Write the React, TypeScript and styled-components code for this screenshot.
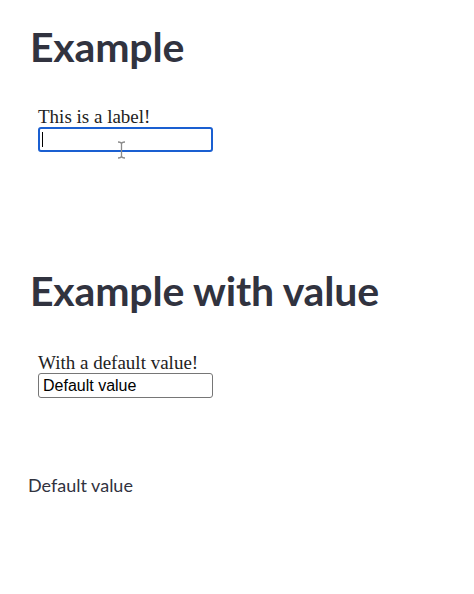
import styled, { createGlobalStyle } from 'styled-components';

const GlobalStyle = createGlobalStyle`
    html, body {
        margin: 0;
        padding: 0;
        background: #ffffff;
    }
`;

const Page = styled.main`
    display: flex;
    flex-direction: column;
    padding: 18px 0 0 30px;
    font-family: 'Lato', 'Noto Sans', sans-serif;
    color: #31333f;
`;

const Heading = styled.h1`
    margin: 0;
    font-size: 41px;
    font-weight: 700;
    line-height: 58px;
    letter-spacing: -0.2px;
    color: #31333f;
`;

const Frame = styled.div<{ height: number }>`
    height: ${(props) => props.height}px;
    padding: 8px;
    display: flex;
    flex-direction: column;
    align-items: flex-start;
    font-family: 'Liberation Serif', 'Times New Roman', serif;
`;

const Label = styled.label`
    font-size: 19px;
    line-height: 21px;
    color: #222;
`;

const FieldWrap = styled.div`
    position: relative;
`;

const TextInput = styled.input<{ focused?: boolean }>`
    box-sizing: border-box;
    width: 175px;
    height: 25px;
    margin: 0;
    padding: 1px 4px;
    font-family: 'Liberation Sans', Arial, sans-serif;
    font-size: 16px;
    color: #000;
    background: #fff;
    border: ${(props) => (props.focused ? '2px solid #1a5fd1' : '1px solid #767676')};
    border-radius: 3px;
    outline: none;
`;

const Caret = styled.span`
    position: absolute;
    left: 4px;
    top: 5px;
    width: 1px;
    height: 15px;
    background: #000;
`;

const Pointer = styled.svg`
    position: absolute;
    left: 79px;
    top: 14px;
`;

const Output = styled.p`
    margin: 0 0 0 -2px;
    font-size: 18px;
    line-height: 24px;
    color: #31333f;
`;

const Spacer = styled.div<{ size: number }>`
    height: ${(props) => props.size}px;
`;

export default function App() {
    return (
        <>
            <GlobalStyle />
            <Page>
                <Heading>Example</Heading>
                <Frame height={170}>
                    <Spacer size={22} />
                    <Label htmlFor="first">This is a label!</Label>
                    <FieldWrap>
                        <TextInput id="first" focused readOnly />
                        <Caret />
                        <Pointer width="9" height="18" viewBox="0 0 9 18">
                            <path d="M1 1 Q4.5 1 4.5 3 V15 Q4.5 17 1 17 M8 1 Q4.5 1 4.5 3 M4.5 15 Q4.5 17 8 17" fill="none" stroke="#8a8a8a" strokeWidth="1.3" />
                        </Pointer>
                    </FieldWrap>
                </Frame>
                <Heading>Example with value</Heading>
                <Frame height={137}>
                    <Spacer size={24} />
                    <Label htmlFor="second">With a default value!</Label>
                    <TextInput id="second" defaultValue="Default value" />
                </Frame>
                <Output>Default value</Output>
            </Page>
        </>
    );
}
